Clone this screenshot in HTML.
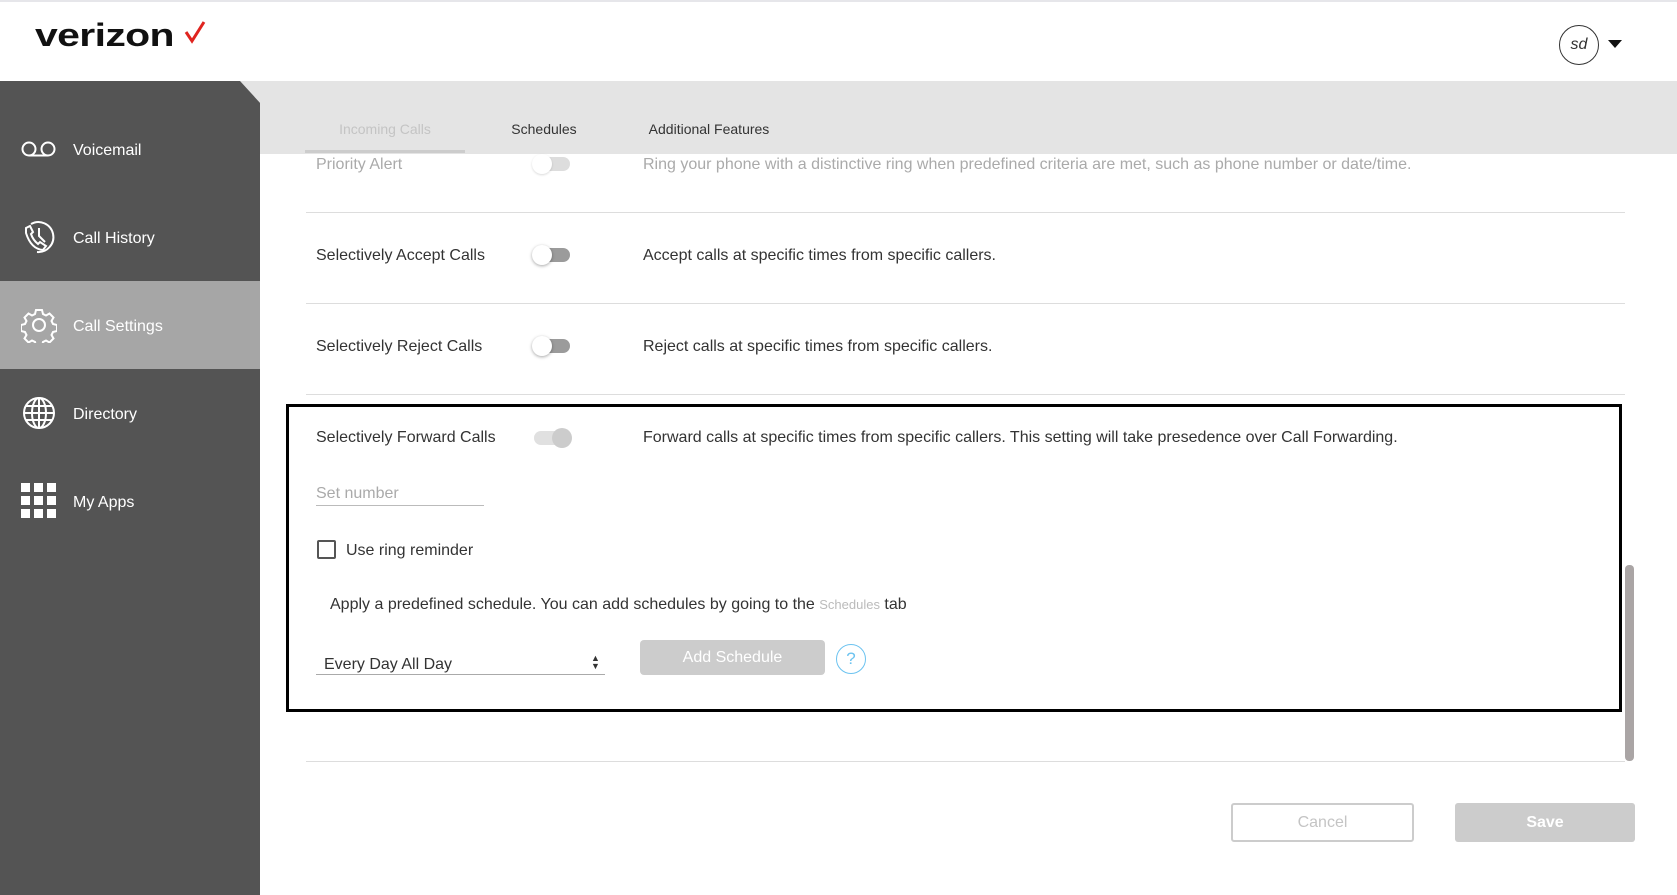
<!DOCTYPE html>
<html><head><meta charset="utf-8"><style>
*{margin:0;padding:0;box-sizing:border-box}
body{width:1677px;height:895px;overflow:hidden;background:#fff;font-family:"Liberation Sans",sans-serif;position:relative;color:#333}
.a{position:absolute}
.side{left:0;top:81px;width:260px;height:814px;background:#545454}
.nav{left:0;width:260px;height:88px;color:#fff;font-size:16px}
.nav span{position:absolute;left:73px;top:50%;transform:translateY(-40%)}
.nav svg{position:absolute;left:21px;top:50%;transform:translateY(-50%)}
.t{font-size:16px;color:#333;white-space:nowrap}
.line{height:1px;background:#ddd;left:306px;width:1319px}
.tog{width:36px;height:14px;border-radius:7px;background:#9b9b9b}
.tog i{position:absolute;left:-2px;top:-3px;width:20px;height:20px;border-radius:50%;background:#fff;box-shadow:0 1px 3px rgba(0,0,0,.35)}
</style></head><body>
<div class="a" style="left:0;top:0;width:1677px;height:2px;background:#e6e6ea"></div>
<div class="a" style="left:35px;top:17px;font-size:32px;font-weight:bold;color:#111;letter-spacing:-0.5px;transform:scaleX(1.28);transform-origin:0 0">verizon</div>
<svg class="a" style="left:184px;top:20px" width="22" height="24" viewBox="0 0 22 24"><path d="M2 12 L8 21 L20 2" stroke="#e0241f" stroke-width="3" fill="none"/></svg>
<div class="a" style="left:1559px;top:25px;width:40px;height:40px;border:1px solid #333;border-radius:50%;font-style:italic;font-size:16px;text-align:center;line-height:38px">sd</div>
<svg class="a" style="left:1608px;top:40px" width="14" height="9"><path d="M0 0H14L7 8Z" fill="#111"/></svg>

<div class="a" style="left:260px;top:81px;width:1417px;height:73px;background:#e4e4e4"></div>
<div class="a side"></div>
<svg class="a" style="left:240px;top:81px" width="21" height="24"><path d="M0 0H21V23Z" fill="#e4e4e4"/></svg>
<div class="a" style="left:305px;top:121px;width:160px;text-align:center;font-size:14px;color:#c4c4c4">Incoming Calls</div>
<div class="a" style="left:305px;top:150px;width:160px;height:3px;background:#ccc"></div>
<div class="a" style="left:494px;top:121px;width:100px;text-align:center;font-size:14px;color:#333">Schedules</div>
<div class="a" style="left:634px;top:121px;width:150px;text-align:center;font-size:14px;color:#333">Additional Features</div>

<div class="a nav" style="top:105px"><svg width="36" height="20" viewBox="0 0 36 20"><circle cx="8" cy="10" r="6.5" stroke="#fff" stroke-width="2" fill="none"/><circle cx="27" cy="10" r="6.5" stroke="#fff" stroke-width="2" fill="none"/><path d="M8 16.5H27" stroke="#fff" stroke-width="2"/></svg><span>Voicemail</span></div>
<div class="a nav" style="top:193px"><svg width="36" height="36" viewBox="0 0 36 36" fill="none" stroke="#fff" stroke-width="2"><path d="M10 5 A15 15 0 1 1 16 33"/><path d="M18 9V17L24 23"/><path d="M5 9 L9 7 L12 13 L10 15 Q12 21 17 25 L19 23 L25 27 L22 31 Q10 30 5 14Z"/></svg><span>Call History</span></div>
<div class="a nav" style="top:281px;background:#a6a6a6"><svg width="36" height="36" viewBox="0 0 36 36" fill="none" stroke="#fff" stroke-width="2"><circle cx="18" cy="18" r="6"/><path d="M15 3h6l1 4 3 1.5 3.5-2 4 4-2 3.5 1.5 3 4 1v6l-4 1-1.5 3 2 3.5-4 4-3.5-2-3 1.5-1 4h-6l-1-4-3-1.5-3.5 2-4-4 2-3.5-1.5-3-4-1v-6l4-1 1.5-3-2-3.5 4-4 3.5 2 3-1.5z"/></svg><span>Call Settings</span></div>
<div class="a nav" style="top:369px"><svg width="36" height="36" viewBox="0 0 36 36" fill="none" stroke="#fff" stroke-width="2"><circle cx="18" cy="18" r="15"/><ellipse cx="18" cy="18" rx="7" ry="15"/><path d="M18 3V33M3 18H33M5 11H31M5 25H31"/></svg><span>Directory</span></div>
<div class="a nav" style="top:457px"><svg width="36" height="36" viewBox="0 0 36 36" fill="#fff"><rect x="0" y="0" width="9" height="9"/><rect x="13" y="0" width="9" height="9"/><rect x="26" y="0" width="9" height="9"/><rect x="0" y="13" width="9" height="9"/><rect x="13" y="13" width="9" height="9"/><rect x="26" y="13" width="9" height="9"/><rect x="0" y="26" width="9" height="9"/><rect x="13" y="26" width="9" height="9"/><rect x="26" y="26" width="9" height="9"/></svg><span>My Apps</span></div>

<div class="a t" style="left:316px;top:156px;color:#aaa">Priority Alert</div>
<div class="a tog" style="left:534px;top:157px;background:#ddd"><i style="box-shadow:0 1px 2px rgba(0,0,0,.15)"></i></div>
<div class="a t" style="left:643px;top:156px;color:#aaa">Ring your phone with a distinctive ring when predefined criteria are met, such as phone number or date/time.</div>
<div class="a line" style="top:212px"></div>
<div class="a t" style="left:316px;top:247px">Selectively Accept Calls</div>
<div class="a tog" style="left:534px;top:248px"><i></i></div>
<div class="a t" style="left:643px;top:247px">Accept calls at specific times from specific callers.</div>
<div class="a line" style="top:303px"></div>
<div class="a t" style="left:316px;top:338px">Selectively Reject Calls</div>
<div class="a tog" style="left:534px;top:339px"><i></i></div>
<div class="a t" style="left:643px;top:338px">Reject calls at specific times from specific callers.</div>
<div class="a line" style="top:394px"></div>

<div class="a" style="left:286px;top:404px;width:1336px;height:308px;border:3px solid #000"></div>
<div class="a t" style="left:316px;top:429px">Selectively Forward Calls</div>
<div class="a tog" style="left:534px;top:431px;background:#e0e0e0"><i style="left:18px;background:#ccc;box-shadow:none"></i></div>
<div class="a t" style="left:643px;top:429px">Forward calls at specific times from specific callers. This setting will take presedence over Call Forwarding.</div>
<div class="a t" style="left:316px;top:485px;color:#aaa">Set number</div>
<div class="a" style="left:316px;top:505px;width:168px;height:1px;background:#bbb"></div>
<div class="a" style="left:317px;top:540px;width:19px;height:19px;border:2px solid #555;border-radius:2px"></div>
<div class="a t" style="left:346px;top:542px">Use ring reminder</div>
<div class="a t" style="left:330px;top:596px">Apply a predefined schedule. You can add schedules by going to the <span style="font-size:13px;color:#bbb">Schedules</span> tab</div>
<div class="a t" style="left:324px;top:656px">Every Day All Day</div>
<div class="a" style="left:591px;top:654px;font-size:9px;line-height:8px;color:#333">▲<br>▼</div>
<div class="a" style="left:316px;top:674px;width:289px;height:1px;background:#aaa"></div>
<div class="a" style="left:640px;top:640px;width:185px;height:35px;background:#ccc;border-radius:4px;color:#fff;font-size:16px;text-align:center;line-height:35px">Add Schedule</div>
<div class="a" style="left:836px;top:644px;width:30px;height:30px;border:1.5px solid #6cc3f0;border-radius:50%;color:#6cc3f0;text-align:center;line-height:27px;font-size:17px">?</div>
<div class="a line" style="top:761px"></div>
<div class="a" style="left:1625px;top:565px;width:9px;height:196px;border-radius:4px;background:#aaa5a5"></div>

<div class="a" style="left:1231px;top:803px;width:183px;height:39px;border:2px solid #ccc;border-radius:3px;text-align:center;line-height:35px;color:#c4c4c4;font-size:16px">Cancel</div>
<div class="a" style="left:1455px;top:803px;width:180px;height:39px;background:#ccc;border-radius:3px;text-align:center;line-height:39px;color:#fff;font-size:16px;font-weight:bold">Save</div>
</body></html>
